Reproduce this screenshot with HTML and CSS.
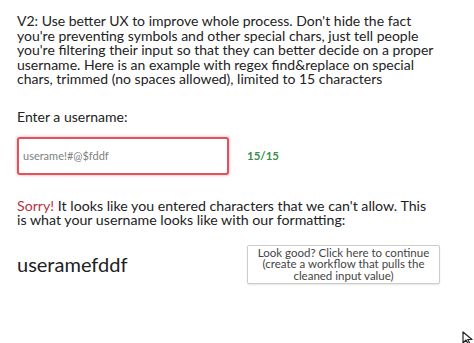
FILE: index.html
```html
<!DOCTYPE html>
<html lang="en">
<head>
  <meta charset="UTF-8"/>
  <title>Username cleaner</title>
  <link rel="stylesheet" href="styles.css">
</head>
<body>

  <!-- Intro -->
  <p class="intro">V2: Use better UX to improve whole process. Don't hide the fact you're preventing symbols and other special chars, just tell people you're filtering their input so that they can better decide on a proper username. Here is an example with regex find&amp;replace on special chars, trimmed (no spaces allowed), limited to 15 characters</p>

  <!-- Input -->
  <label class="label" for="username">Enter a username:</label>
  <div class="input-row">
    <input type="text" id="username" class="username-input" placeholder="userame!#@$fddf"/>
    <span class="counter">15/15</span>
  </div>

  <!-- Result -->
  <p class="warning"><span class="sorry">Sorry!</span> It looks like you entered characters that we can't allow. This is what your username looks like with our formatting:</p>

  <div class="result-row">
    <div class="cleaned">useramefddf</div>
    <button class="continue-btn">Look good? Click here to continue (create a workflow that pulls the cleaned input value)</button>
  </div>

  <svg class="cursor" width="12" height="14" viewBox="0 0 12 14">
    <path d="M1 1 L1 12 L4 9 L6.5 13.5 L8 12.8 L5.8 8.5 L10 8.5 Z" fill="#fff" stroke="#222" stroke-width="1.2" stroke-linejoin="round"/>
  </svg>

</body>
</html>
```

FILE: styles.css
```css
body {
  font-family: Lato, "Open Sans", sans-serif;
  color: #222;
  margin: 0;
  padding: 14px 17px;
  background: #fff;
  position: relative;
  height: 343px;
  box-sizing: border-box;
  overflow: hidden;
}

.intro {
  font-size: 14px;
  line-height: 14.5px;
  margin: 0;
  width: 427px;
}

.label {
  display: block;
  font-size: 14px;
  margin-top: 21px;
}

.input-row {
  display: flex;
  align-items: center;
  margin-top: 12px;
}

.username-input {
  width: 212px;
  height: 38px;
  box-sizing: border-box;
  border: 2px solid #e0525e;
  border-radius: 3px;
  box-shadow: 0 0 3px rgba(224, 82, 94, 0.6);
  padding: 0 4px;
  font-family: Lato, sans-serif;
  font-size: 11px;
  outline: none;
}

.username-input::placeholder {
  color: #808080;
}

.counter {
  color: #3a8f4e;
  font-weight: bold;
  font-size: 11.5px;
  margin-left: 18px;
}

.warning {
  font-size: 14.2px;
  line-height: 14.5px;
  margin: 24px 0 0;
  width: 418px;
}

.sorry {
  color: #b8333f;
}

.result-row {
  display: flex;
  align-items: center;
  margin-top: 17px;
}

.cleaned {
  font-size: 20px;
  color: #222;
  width: 230px;
}

.continue-btn {
  width: 193px;
  height: 39px;
  background: #fff;
  border: 1px solid #ccc;
  border-radius: 2px;
  box-shadow: 0 1px 2px rgba(0, 0, 0, 0.1);
  font-family: Lato, sans-serif;
  font-size: 11.5px;
  line-height: 11.5px;
  color: #444;
  padding: 0 6px;
}

.cursor {
  position: absolute;
  left: 462px;
  top: 331px;
}
```
